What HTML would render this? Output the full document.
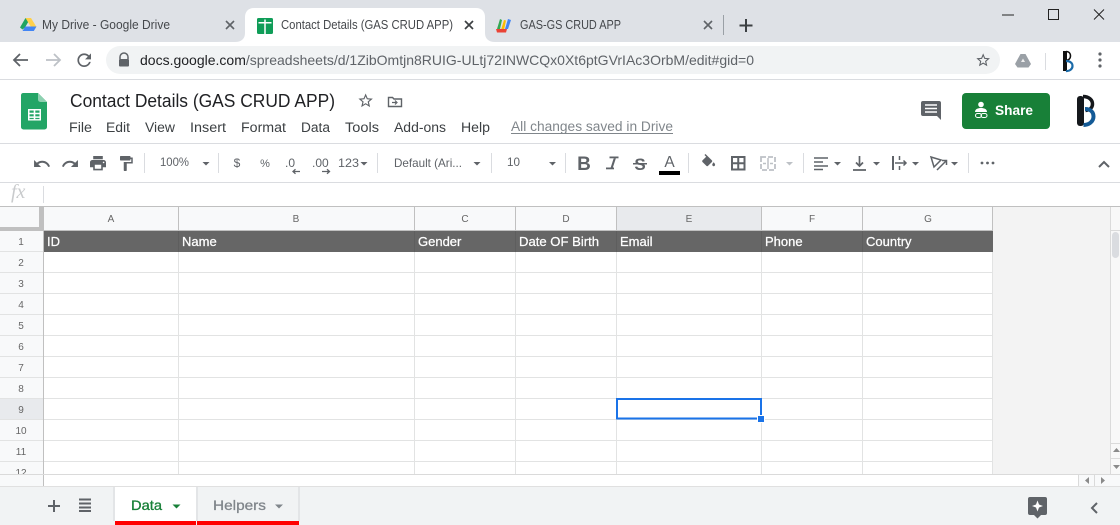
<!DOCTYPE html>
<html><head><meta charset="utf-8"><style>
html,body{margin:0;padding:0;width:1120px;height:525px;overflow:hidden;background:#fff}
svg{display:block}
text{font-family:"Liberation Sans",sans-serif}
.t{font-size:12.500px;fill:#45484c}
.m{font-size:13.500px;fill:#3c4043}
.tb{font-size:12px;fill:#5f6368}
.c{font-size:10px;fill:#666;text-anchor:middle}
.r{font-size:10px;fill:#666;text-anchor:middle}
.h{font-size:13px;fill:#fff;stroke:#fff;stroke-width:.25px}
</style></head><body>
<svg width="1120" height="525" viewBox="0 0 1120 525" xmlns="http://www.w3.org/2000/svg">
<!-- chrome -->
<rect width="1120" height="42" fill="#dee1e6"/>
<rect y="42" width="1120" height="37" fill="#fff"/>
<rect y="79" width="1120" height="1" fill="#dadce0"/>
<path d="M235 42c6 0 10-3 10-9V17c0-5 3-9 9-9h222c6 0 9 4 9 9v16c0 6 4 9 10 9z" fill="#fff"/>
<!-- drive tab icon -->
<path d="M20 27.500l5.500-9.500h5l-5.500 9.500-2.500 2z" fill="#1fa463"/><path d="M25.500 18h5.500l5.500 9h-5.500z" fill="#ffd04b"/><path d="M22.500 31l2.700-4.500H36.500l-2.700 4.500z" fill="#4285f4"/>
<text x="42" y="29" class="t" textLength="128" lengthAdjust="spacingAndGlyphs">My Drive - Google Drive</text>
<path d="M226 21l8 8M234 21l-8 8" stroke="#5f6368" stroke-width="1.600" fill="none"/>
<!-- sheets tab -->
<rect x="257" y="18" width="16" height="16" rx="1.500" fill="#0f9d58"/><path d="M258.500 22.800h13M265 19.500V34" stroke="#fff" stroke-width="1.500" fill="none"/>
<text x="281" y="29" class="t" textLength="172" lengthAdjust="spacingAndGlyphs">Contact Details (GAS CRUD APP)</text>
<path d="M465 21l8 8M473 21l-8 8" stroke="#3c4043" stroke-width="1.700" fill="none"/>
<!-- third tab -->
<path d="M497 29l3-10 2 1-2 9z" fill="#34a853"/><path d="M501 30l3-10 2 .5-2 9.500z" fill="#fbbc04"/><path d="M505 29l3-10 3 1-3 9z" fill="#4285f4"/><path d="M496 29h11l-1 3.500h-9z" fill="#ea4335"/>
<text x="520" y="29" class="t" textLength="101" lengthAdjust="spacingAndGlyphs">GAS-GS CRUD APP</text>
<path d="M704 21l8 8M712 21l-8 8" stroke="#5f6368" stroke-width="1.600" fill="none"/>
<rect x="723" y="15" width="1" height="20" fill="#9aa0a6"/>
<path d="M746 19v13M739.500 25.500h13" stroke="#3c4043" stroke-width="2" fill="none"/>
<path d="M1002 15h12" stroke="#222" stroke-width="1"/>
<rect x="1048.500" y="9.500" width="10" height="10" fill="none" stroke="#222"/>
<path d="M1094 9.500l10 10M1104 9.500l-10 10" stroke="#222" stroke-width="1" fill="none"/>
<!-- nav -->
<path d="M28 60H14M20 54l-6 6 6 6" stroke="#5f6368" stroke-width="1.800" fill="none"/>
<path d="M46 60h14M54 54l6 6-6 6" stroke="#bdc1c6" stroke-width="1.800" fill="none"/>
<path transform="translate(74,50) scale(.85)" d="M17.650 6.350C16.200 4.900 14.210 4 12 4c-4.420 0-7.990 3.580-7.990 8s3.570 8 7.990 8c3.730 0 6.840-2.550 7.730-6h-2.080c-.82 2.330-3.040 4-5.650 4-3.310 0-6-2.690-6-6s2.690-6 6-6c1.660 0 3.140.69 4.220 1.780L13 11h7V4l-2.350 2.350z" fill="#5f6368"/>
<rect x="106" y="46" width="894" height="28" rx="14" fill="#f1f3f4"/>
<path d="M120 59v-2a4 4 0 0 1 8 0v2" stroke="#5f6368" stroke-width="1.500" fill="none"/><rect x="119" y="59" width="10" height="7.500" rx="1" fill="#5f6368"/>
<text x="140" y="65" font-size="14" fill="#202124" textLength="614" lengthAdjust="spacingAndGlyphs"><tspan>docs.google.com</tspan><tspan fill="#5f6368">/spreadsheets/d/1ZibOmtjn8RUIG-ULtj72INWCQx0Xt6ptGVrIAc3OrbM/edit#gid=0</tspan></text>
<path transform="translate(975,52) scale(.68)" d="M22 9.240l-7.190-.62L12 2 9.190 8.630 2 9.240l5.460 4.730L5.820 21 12 17.270 18.180 21l-1.630-7.030L22 9.240zM12 15.400l-3.760 2.270 1-4.280-3.320-2.880 4.380-.38L12 6.100l1.710 4.040 4.380.38-3.320 2.880 1 4.280L12 15.400z" fill="#5f6368"/>
<path d="M1015 64l5.500-10h5l5.500 10-2.500 3.500h-11z" fill="#9aa0a6"/><path d="M1021 62l2-3.500 2 3.500z" fill="#eee"/>
<rect x="1045" y="53" width="1" height="17" fill="#dadce0"/>
<path d="M1065 51v20" stroke="#111" stroke-width="4"/><path d="M1066 51.500c3 0 4.500 2 4.500 4.500s-2 4-4 4.500" stroke="#111" stroke-width="1.600" fill="none"/><path d="M1066 61c4 0 6.500 2 6.500 5s-3 5.500-6.500 5" stroke="#1a6aa8" stroke-width="2.200" fill="none"/>
<circle cx="1100" cy="54" r="1.600" fill="#5f6368"/><circle cx="1100" cy="60" r="1.600" fill="#5f6368"/><circle cx="1100" cy="66" r="1.600" fill="#5f6368"/>
<!-- doc header -->
<path d="M23 93h15l9 9v25a2.500 2.500 0 0 1-2.500 2.500h-21A2.500 2.500 0 0 1 21 127V95.500A2.500 2.500 0 0 1 23 93z" fill="#23a566"/>
<path d="M38 93l9 9h-6.500A2.500 2.500 0 0 1 38 99.500z" fill="#8ed1b1"/>
<path d="M28 109h13v11.500H28zM29.500 110.500v2.200h4.200v-2.200zm5.800 0v2.200h4.200v-2.200zm-5.800 3.700v2.200h4.200v-2.200zm5.800 0v2.200h4.200v-2.200zm-5.800 3.700v1.200h4.200v-1.200zm5.800 0v1.200h4.200v-1.200z" fill="#fff" fill-rule="evenodd"/>
<text x="70" y="107" font-size="18" fill="#202124" textLength="265" lengthAdjust="spacingAndGlyphs">Contact Details (GAS CRUD APP)</text>
<path transform="translate(357,92) scale(.72)" d="M22 9.240l-7.190-.62L12 2 9.190 8.630 2 9.240l5.460 4.730L5.820 21 12 17.270 18.180 21l-1.630-7.030L22 9.240zM12 15.400l-3.760 2.270 1-4.280-3.320-2.880 4.380-.38L12 6.100l1.710 4.040 4.380.38-3.320 2.880 1 4.280L12 15.400z" fill="#5f6368"/>
<path d="M388.500 97.500h4l1.500 1.500h7.500v7.500h-13z" fill="none" stroke="#5f6368" stroke-width="1.400"/><path d="M392 102.500h4M395 100.500l2 2-2 2" stroke="#5f6368" stroke-width="1.200" fill="none"/>
<g>
<text x="69" y="132" class="m" textLength="23" lengthAdjust="spacingAndGlyphs">File</text>
<text x="106" y="132" class="m" textLength="24" lengthAdjust="spacingAndGlyphs">Edit</text>
<text x="145" y="132" class="m" textLength="30" lengthAdjust="spacingAndGlyphs">View</text>
<text x="190" y="132" class="m" textLength="36" lengthAdjust="spacingAndGlyphs">Insert</text>
<text x="241" y="132" class="m" textLength="45" lengthAdjust="spacingAndGlyphs">Format</text>
<text x="301" y="132" class="m" textLength="29" lengthAdjust="spacingAndGlyphs">Data</text>
<text x="345" y="132" class="m" textLength="34" lengthAdjust="spacingAndGlyphs">Tools</text>
<text x="394" y="132" class="m" textLength="52" lengthAdjust="spacingAndGlyphs">Add-ons</text>
<text x="461" y="132" class="m" textLength="29" lengthAdjust="spacingAndGlyphs">Help</text>
</g>
<text x="511" y="131" font-size="13.500" fill="#80868b" textLength="162" lengthAdjust="spacingAndGlyphs">All changes saved in Drive</text>
<rect x="511" y="133" width="162" height="1" fill="#80868b"/>
<!-- comment -->
<path d="M923 101h16a2 2 0 0 1 2 2v17l-4-4h-14a2 2 0 0 1-2-2v-11a2 2 0 0 1 2-2z" fill="#5f6368"/><path d="M925 105h12M925 108.500h12M925 112h12" stroke="#fff" stroke-width="1.500"/>
<!-- share -->
<rect x="962" y="93" width="88" height="36" rx="4" fill="#188038"/>
<circle cx="981" cy="104.500" r="2.800" fill="#fff"/><path d="M975 112c0-3 3-4 6-4s6 1 6 4z" fill="#fff"/>
<rect x="975.500" y="113.500" width="6" height="4" rx="2" fill="none" stroke="#fff" stroke-width="1"/><rect x="981" y="113.500" width="6" height="4" rx="2" fill="none" stroke="#fff" stroke-width="1"/>
<text x="995" y="115" font-size="13.500" font-weight="bold" fill="#fff" textLength="38" lengthAdjust="spacingAndGlyphs">Share</text>
<!-- logo -->
<rect x="1077" y="96" width="7" height="30" rx="3" fill="#15181c"/>
<path d="M1083 96.500c6 0 9.500 3.500 9.500 7.500 0 3.500-2.500 6-7 6.500" stroke="#15181c" stroke-width="3.500" fill="none"/>
<path d="M1085 109c6 0 8.500 3.500 8.500 7.500 0 5-4.500 8.500-10 8.500" stroke="#135a96" stroke-width="4" fill="none"/>
<!-- toolbar -->
<rect y="143" width="1120" height="1" fill="#dadce0"/>
<rect y="182" width="1120" height="1" fill="#dadce0"/>
<path transform="translate(32.500,154.500) scale(.78)" d="M12.500 8c-2.650 0-5.050.99-6.900 2.600L2 7v9h9l-3.620-3.620c1.390-1.160 3.160-1.880 5.120-1.880 3.540 0 6.550 2.310 7.600 5.500l2.370-.78C21.080 11.030 17.150 8 12.500 8z" fill="#5f6368"/>
<path transform="translate(60.800,154.500) scale(.78)" d="M18.400 10.600C16.550 8.990 14.150 8 11.500 8c-4.650 0-8.580 3.030-9.960 7.220L3.900 16c1.050-3.190 4.050-5.500 7.600-5.500 1.950 0 3.730.72 5.120 1.880L13 16h9V7l-3.600 3.600z" fill="#5f6368"/>
<path transform="translate(88.400,153.600) scale(.8)" d="M19 8H5c-1.660 0-3 1.340-3 3v6h4v4h12v-4h4v-6c0-1.660-1.340-3-3-3zm-3 11H8v-5h8v5zm3-7c-.55 0-1-.45-1-1s.45-1 1-1 1 .45 1 1-.45 1-1 1zm-1-9H6v4h12V3z" fill="#5f6368"/>
<path transform="translate(117,154.500) scale(.75)" d="M18 4V3c0-.55-.45-1-1-1H5c-.55 0-1 .45-1 1v4c0 .55.45 1 1 1h12c.55 0 1-.45 1-1V6h1v4H9v11c0 .55.45 1 1 1h2c.55 0 1-.45 1-1v-9h8V4h-3z" fill="#5f6368"/>
<g fill="#dadce0"><rect x="144" y="153" width="1" height="20"/><rect x="218" y="153" width="1" height="20"/><rect x="377" y="153" width="1" height="20"/><rect x="491" y="153" width="1" height="20"/><rect x="565" y="153" width="1" height="20"/><rect x="688" y="153" width="1" height="20"/><rect x="803" y="153" width="1" height="20"/><rect x="968" y="153" width="1" height="20"/></g>
<text x="160" y="166" class="tb" textLength="29" lengthAdjust="spacingAndGlyphs">100%</text>
<g fill="#5f6368">
<path d="M202.500 162h7l-3.500 3.500z"/><path d="M360.500 162h7l-3.500 3.500z"/><path d="M473.500 162h7l-3.500 3.500z"/><path d="M549 162h7l-3.500 3.500z"/>
<path d="M834 162h7l-3.500 3.500z"/><path d="M873 162h7l-3.500 3.500z"/><path d="M912 162h7l-3.500 3.500z"/><path d="M951 162h7l-3.500 3.500z"/>
</g>
<path d="M786 162h7l-3.500 3.500z" fill="#bdc1c6"/>
<text x="237" y="167" class="tb" text-anchor="middle">$</text>
<text x="265" y="167" font-size="11" fill="#5f6368" text-anchor="middle">%</text>
<text x="285" y="167" class="tb">.0</text>
<path d="M300 171.500h-7M295.500 169.300l-2.500 2.200 2.500 2.200" stroke="#5f6368" stroke-width="1.300" fill="none"/>
<text x="312" y="167" class="tb">.00</text>
<path d="M322 171.500h7.500M327 169.300l2.500 2.200-2.500 2.200" stroke="#5f6368" stroke-width="1.300" fill="none"/>
<text x="338" y="167" class="tb" textLength="21" lengthAdjust="spacingAndGlyphs">123</text>
<text x="394" y="167" class="tb" textLength="68" lengthAdjust="spacingAndGlyphs">Default (Ari...</text>
<text x="507" y="166" class="tb" textLength="13" lengthAdjust="spacingAndGlyphs">10</text>
<text x="584" y="170" font-size="19" font-weight="bold" fill="#5f6368" text-anchor="middle">B</text>
<text transform="translate(611.500,168.500) skewX(-18)" font-size="15" font-weight="bold" fill="#5f6368" text-anchor="middle">I</text>
<rect x="606" y="167.500" width="8" height="1.800" fill="#5f6368"/><rect x="609.500" y="156.500" width="9" height="1.800" fill="#5f6368"/>
<text x="640" y="170" font-size="17" font-weight="bold" fill="#5f6368" text-anchor="middle">S</text>
<rect x="633" y="163" width="14" height="1.500" fill="#5f6368"/>
<text x="669.500" y="167" font-size="15.500" fill="#5f6368" text-anchor="middle">A</text>
<rect x="659" y="171" width="21" height="4" fill="#000"/>
<path transform="translate(700,154) scale(.72)" d="M16.560 8.940L7.620 0 6.210 1.410l2.380 2.380-5.150 5.150c-.59.59-.59 1.540 0 2.120l5.500 5.500c.29.29.68.44 1.060.44s.77-.15 1.060-.44l5.500-5.500c.59-.58.59-1.530 0-2.120zM19 11.500s-2 2.170-2 3.500c0 1.100.9 2 2 2s2-.9 2-2c0-1.330-2-3.500-2-3.500z" fill="#5f6368"/>
<path d="M732 157h12.500v12.500H732zM738.250 157v12.500M732 163.250h12.500" stroke="#5f6368" stroke-width="2" fill="none"/>
<path d="M761 157h14v13h-14z" stroke="#bdc1c6" stroke-width="1.800" fill="none" stroke-dasharray="5 2"/><path d="M763 163.500h3M773 163.500h-3M768 158v11" stroke="#bdc1c6" stroke-width="1.500"/>
<path d="M814 158h14M814 162h9M814 166h14M814 169.500h9" stroke="#5f6368" stroke-width="1.600"/>
<path d="M853 170h13M859.500 156v10M856 162.500l3.500 3.500 3.500-3.500" stroke="#5f6368" stroke-width="1.700" fill="none"/>
<path d="M893 156v14" stroke="#5f6368" stroke-width="2" fill="none"/><path d="M899.500 156v4M899.500 166v4M895 163h11M903.500 160.500l2.500 2.500-2.500 2.500" stroke="#5f6368" stroke-width="1.500" fill="none"/>
<path d="M931 157l10 3-7 7zM937 170l9-9M942 160.500h4.500v4.500" stroke="#5f6368" stroke-width="1.500" fill="none"/>
<circle cx="982" cy="163" r="1.400" fill="#5f6368"/><circle cx="987.500" cy="163" r="1.400" fill="#5f6368"/><circle cx="993" cy="163" r="1.400" fill="#5f6368"/>
<path d="M1099 167l5-5 5 5" stroke="#5f6368" stroke-width="2" fill="none"/>
<!-- formula bar -->
<text x="11" y="198" font-size="20" font-style="italic" fill="#c9cbcd" style="font-family:'Liberation Serif',serif">fx</text>
<rect x="43" y="186" width="1" height="17" fill="#dadce0"/>
<rect y="206" width="1120" height="1" fill="#c0c0c0"/>
<!-- grid background -->
<rect x="0" y="207" width="44" height="268" fill="#f8f9fa"/>
<rect x="44" y="207" width="949" height="23" fill="#f8f9fa"/>
<rect x="617" y="207" width="144" height="23" fill="#e8eaed"/>
<rect x="0" y="398" width="43" height="21" fill="#e8eaed"/>
<rect x="993" y="207" width="118" height="268" fill="#f3f3f3"/>
<rect x="39" y="207" width="4" height="23" fill="#c0c0c0"/>
<rect x="0" y="230" width="993" height="1" fill="#c0c0c0"/>
<rect x="0" y="227" width="43" height="3" fill="#c0c0c0"/>
<!-- header row data -->
<rect x="44" y="231" width="949" height="21" fill="#666"/>
<!-- rows -->
<path stroke="#e2e3e3" stroke-width="1" fill="none" d="M44 272.500H993M44 293.500H993M44 314.500H993M44 335.500H993M44 356.500H993M44 377.500H993M44 398.500H993M44 419.500H993M44 440.500H993M44 461.500H993"/>
<path stroke="#e2e3e3" stroke-width="1" fill="none" d="M0 251.500H43M0 272.500H43M0 293.500H43M0 314.500H43M0 335.500H43M0 356.500H43M0 377.500H43M0 398.500H43M0 419.500H43M0 440.500H43M0 461.500H43"/>
<path stroke="#e2e3e3" stroke-width="1" fill="none" d="M178.500 252V474M414.500 252V474M515.500 252V474M616.500 252V474M761.500 252V474M862.500 252V474M992.500 252V474"/>
<path stroke="#5e5e5e" stroke-width="1" fill="none" d="M178.500 231V252M414.500 231V252M515.500 231V252M616.500 231V252M761.500 231V252M862.500 231V252"/>
<path stroke="#c0c0c0" stroke-width="1" fill="none" d="M43.500 207V486M178.500 207V230M414.500 207V230M515.500 207V230M616.500 207V230M761.500 207V230M862.500 207V230M992.500 207V231"/>
<!-- col labels -->
<text x="111" y="222" class="c">A</text><text x="296" y="222" class="c">B</text><text x="465" y="222" class="c">C</text><text x="566" y="222" class="c">D</text><text x="689" y="222" class="c">E</text><text x="812" y="222" class="c">F</text><text x="928" y="222" class="c">G</text>
<!-- row labels -->
<text x="21" y="245" class="r">1</text><text x="21" y="266" class="r">2</text><text x="21" y="287" class="r">3</text><text x="21" y="308" class="r">4</text><text x="21" y="329" class="r">5</text><text x="21" y="350" class="r">6</text><text x="21" y="371" class="r">7</text><text x="21" y="392" class="r">8</text><text x="21" y="413" class="r">9</text><text x="21" y="434" class="r">10</text><text x="21" y="455" class="r">11</text><text x="21" y="476" class="r">12</text>
<!-- headers -->
<text x="47" y="246" class="h">ID</text><text x="182" y="246" class="h">Name</text><text x="418" y="246" class="h">Gender</text><text x="519" y="246" class="h" textLength="80" lengthAdjust="spacingAndGlyphs">Date OF Birth</text><text x="620" y="246" class="h">Email</text><text x="765" y="246" class="h">Phone</text><text x="866" y="246" class="h">Country</text>
<!-- selection -->
<rect x="617" y="399" width="144" height="19.500" fill="none" stroke="#1a73e8" stroke-width="2"/>
<rect x="757" y="415" width="8" height="8" fill="#fff"/><rect x="758" y="416" width="6" height="6" fill="#1a73e8"/>
<!-- right scrollbar -->
<rect x="1111" y="207" width="9" height="268" fill="#f8f8f8"/>
<rect x="1110" y="207" width="1" height="280" fill="#dadada"/>
<rect x="1111" y="230" width="9" height="1" fill="#dadada"/>
<rect x="1112" y="232" width="7" height="26" rx="3.500" fill="#dadce0"/>
<rect x="1111" y="443" width="9" height="1" fill="#dadada"/><rect x="1111" y="458" width="9" height="1" fill="#dadada"/>
<path d="M1113 452h7l-3.500-4zM1113 465h7l-3.500 4z" fill="#8a8a8a"/>
<!-- bottom scroll area -->
<rect x="0" y="474" width="1120" height="1" fill="#dadada"/>
<rect x="0" y="475" width="44" height="11" fill="#f8f9fa"/>
<rect x="44" y="475" width="1066" height="11" fill="#fff"/>
<rect x="1078" y="475" width="32" height="11" fill="#f8f9fa"/>
<rect x="43" y="475" width="1" height="11" fill="#c0c0c0"/>
<path d="M1078.500 475v11M1094.500 475v11" stroke="#dadada"/>
<path d="M1089 477v7l-4-3.500zM1101 477v7l4-3.500z" fill="#8a8a8a"/>
<rect x="1110" y="475" width="10" height="11" fill="#f8f9fa"/>
<rect x="0" y="486" width="1120" height="1" fill="#e0e0e0"/>
<!-- tab bar -->
<rect x="0" y="487" width="1120" height="38" fill="#f1f3f4"/>
<path d="M54 500v12M48 506h12" stroke="#5f6368" stroke-width="2"/>
<path d="M79 499.500h12M79 503.500h12M79 507.500h12M79 511h12" stroke="#5f6368" stroke-width="2"/>
<rect x="113" y="487" width="2" height="34" fill="#e3e5e7"/>
<rect x="115" y="487" width="81" height="34" fill="#fff"/>
<rect x="196" y="487" width="2" height="34" fill="#e3e5e7"/>
<rect x="298" y="487" width="2" height="34" fill="#e3e5e7"/>
<rect x="115" y="521" width="81" height="4" fill="#f00"/>
<rect x="197" y="521" width="102" height="4" fill="#f00"/>
<text x="131" y="510" font-size="14" fill="#188038" stroke="#188038" stroke-width=".3" textLength="31" lengthAdjust="spacingAndGlyphs">Data</text>
<path d="M172.500 504.500h8l-4 4z" fill="#188038"/>
<text x="213" y="510" font-size="14" fill="#80868b" stroke="#80868b" stroke-width=".3" textLength="53" lengthAdjust="spacingAndGlyphs">Helpers</text>
<path d="M275 504.500h8l-4 4z" fill="#80868b"/>
<path d="M1030 497h15a2 2 0 0 1 2 2v14a2 2 0 0 1-2 2h-4l-3.500 3.500L1034 515h-4a2 2 0 0 1-2-2v-14a2 2 0 0 1 2-2z" fill="#5f6368"/>
<path d="M1037.500 500.500l1.500 4 4 1.500-4 1.500-1.500 4-1.500-4-4-1.500 4-1.500z" fill="#fff"/>
<path d="M1097 503l-5 5 5 5" stroke="#5f6368" stroke-width="2" fill="none"/>
</svg>
</body></html>
